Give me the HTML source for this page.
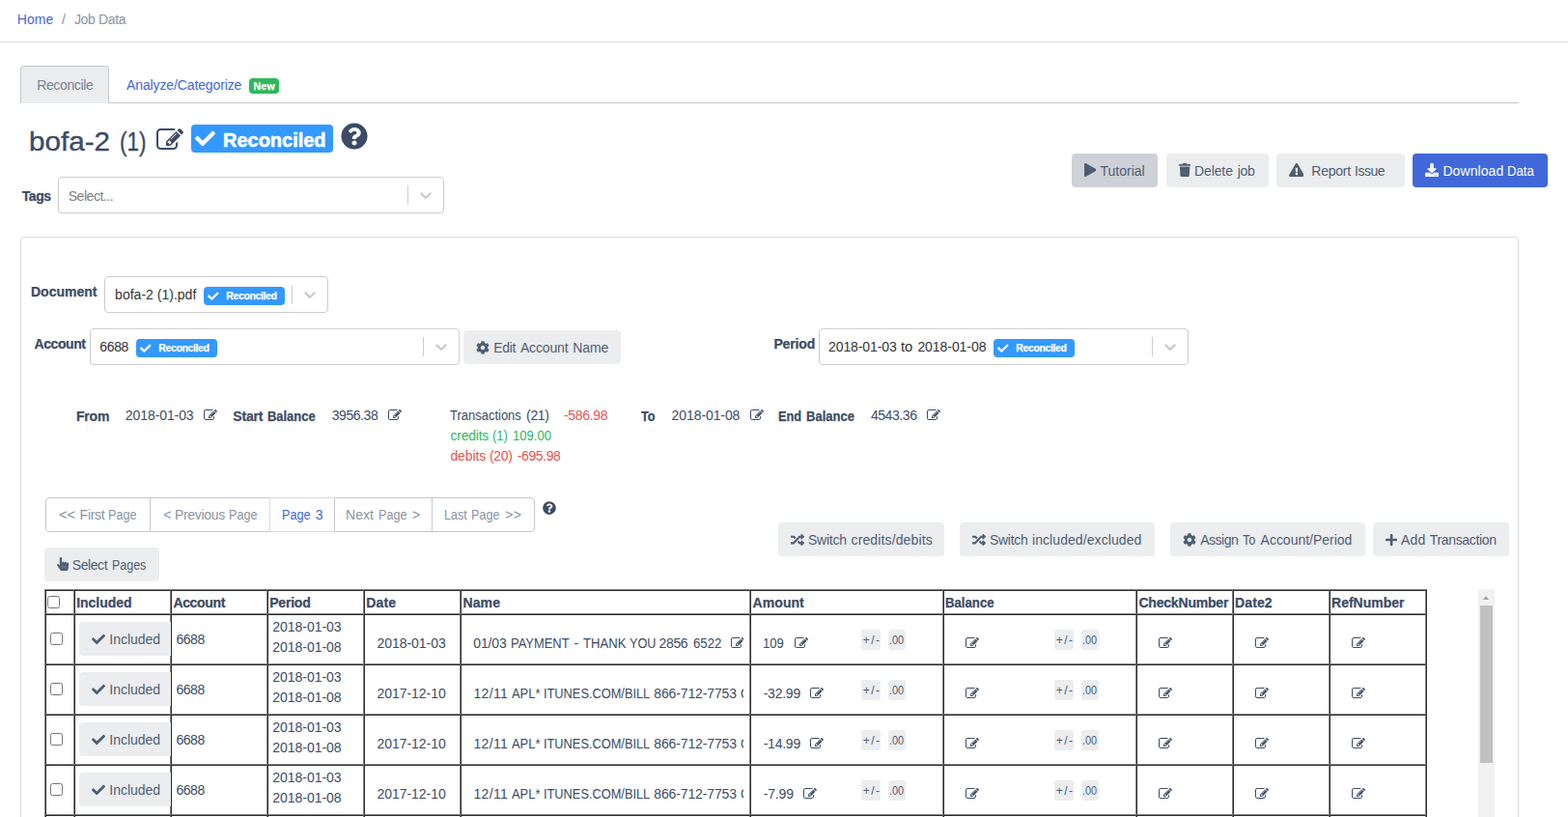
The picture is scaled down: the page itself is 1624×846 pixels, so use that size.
<!DOCTYPE html>
<html lang="en">
<head>
<meta charset="utf-8">
<title>Job Data</title>
<style>
*{box-sizing:border-box}
html,body{margin:0;padding:0}
body{width:1624px;height:846px;overflow:hidden;background:#fff;color:#3c4b64;font-family:"Liberation Sans",sans-serif;font-size:14px;line-height:21px;position:relative}
a{color:#4466d8;text-decoration:none}
button{font:inherit;border:0;margin:0;padding:0;display:block;text-align:left}
label{display:block}
.abs{position:absolute}
svg.i{position:absolute;display:block;fill:currentColor}
.tx{position:absolute;white-space:nowrap;line-height:21px;margin:0;font-weight:normal;transform-origin:0 0}
.tx.b{font-weight:bold;-webkit-text-stroke:0.25px}
.tx.red{color:#e55353}
.tx.green{color:#2eb85c}
.tx.mut{color:#8a93a2}
.crumb{left:0;top:0;width:1624px;height:44px;border-bottom:1px solid #d8dbe0}
.tabline{left:21px;top:106px;width:1552px;height:1px;background:#c4c9d0}
.tab1{left:21px;top:68px;width:92px;height:39px;border:1px solid #c4c9d0;border-bottom:0;border-radius:4px 4px 0 0;background:#ebedef;color:#768192}
.tab2{left:122px;top:68px;width:180px;height:39px}
.badge-new{position:absolute;left:136px;top:13px;width:31px;height:16px;background:#2eb85c;color:#fff;border-radius:4px}
.badge-new .tx{font-size:10.5px}
.titlerow{left:21px;top:124px;width:500px;height:40px}
h2{margin:0;font-weight:normal;font-size:28px}
h2 .tx{font-size:28px;-webkit-text-stroke:0.35px #3c4b64}
.bigbadge{position:absolute;left:177px;top:5px;width:147px;height:29px;border-radius:4px;background:#39f;color:#fff}
.bigbadge .tx{font-size:21px;-webkit-text-stroke:0.6px}
.btn{position:absolute;height:35px;border-radius:4px;background:#ebedef;color:#4f5d73}
.btn.sec{background:#ced2d8}
.btn.pri{background:#4068d9;color:#fff}
.sel{position:absolute;height:38px;border:1px solid #ccc;border-radius:4px;background:#fff;color:#333}
.sel .ph{color:#808080}
.sel .bar{position:absolute;right:36px;top:8px;width:1px;height:20px;background:#ccc}
.sel svg.ch{position:absolute;right:8px;top:8px;fill:#ccc}
.rb{position:absolute;width:84px;height:19px;background:#39f;color:#fff;border-radius:4px}
.rb .tx{font-size:10.5px}
.card{left:21px;top:245px;width:1552px;height:620px;border:1px solid #d8dbe0;border-radius:4px}
.summary{left:0;top:0;width:0;height:0}
.pg{left:47px;top:515px;width:507px;height:36px}
.pg>span{position:absolute;top:0;height:36px;border:1px solid #c4c9d0;color:#8a93a2}
.pg>span:first-child{border-radius:4px 0 0 4px}
.pg>span:nth-child(4){border-radius:0 4px 4px 0}
.pg>span.act{color:#4466d8;border-color:#d8dbe0 #c4c9d0 #d8dbe0 #d8dbe0}
.pg .tx{margin-left:0}
.tw{left:46px;top:610px;width:1432px;height:236px;overflow:hidden}
table.t{border-collapse:separate;border-spacing:0;table-layout:fixed;width:1432px;border:1px solid;border-color:#808080 #2c2c2c #2c2c2c #808080}
table.t th,table.t td{border:1px solid;border-color:#2c2c2c #808080 #808080 #2c2c2c;padding:0;text-align:left;white-space:nowrap;overflow:hidden;position:relative}
table.t th{height:25px}
table.t td{height:52px;background:#fff}
table.t td.ov{overflow:visible}
.nm{position:absolute;left:0;top:0;width:298px;height:50px}
.clip{width:292px;overflow:hidden}
.cb{position:absolute;width:13px;height:13px;border:1px solid #767676;border-radius:2.5px;background:#fff}
.inc{position:absolute;left:4px;top:7px;width:104px;height:35px;background:#ebedef;border-radius:4px;color:#4f5d73}
.mini{position:absolute;top:15px;height:21px;background:#ebedef;color:#4f5d73;border-radius:3px}
.mini .tx{font-size:12px}
.sb{left:1531px;top:610px;width:17px;height:236px;background:#f1f1f1}
.sb .thumb{position:absolute;left:2px;top:17px;width:13px;height:163px;background:#c1c1c1}
.sb .arrow{position:absolute;left:5px;top:7px;width:0;height:0;border-left:3.5px solid transparent;border-right:3.5px solid transparent;border-bottom:4px solid #a3a3a3}
</style>
</head>
<body>
<nav class="abs crumb"><a class="tx" style="left:17.75px;top:10px;letter-spacing:0.08px">Home</a><span class="tx mut" style="left:64px;top:10px">/</span><span class="tx mut" style="left:76.9px;top:10px;letter-spacing:-0.33px">Job Data</span></nav>
<div class="abs tabline"></div>
<div class="abs tab1"><span class="tx" style="left:16.2px;top:9px;letter-spacing:-0.36px">Reconcile</span></div>
<div class="abs tab2"><a class="tx" style="left:9px;top:10px;letter-spacing:-0.12px">Analyze/Categorize</a><span class="badge-new"><span class="tx b" style="left:4.5px;top:-2px;letter-spacing:0.25px">New</span></span></div>
<div class="abs titlerow"><h2><span class="tx" style="left:9.18px;top:12px;transform:scaleX(1.059)">bofa-2 </span><span class="tx" style="left:102.5px;top:12px;transform:scaleX(0.803)">(1)</span></h2><svg class="i" width="28" height="28" viewBox="0 0 1792 1792" style="left:141px;top:7px"><path d="M888 1184l116-116-152-152-116 116v56h96v96h56zm440-720q-16-16-33 1l-350 350q-17 17-1 33t33-1l350-350q17-17 1-33zm80 594v190q0 119-84.500 203.500t-203.500 84.500h-832q-119 0-203.500-84.500t-84.500-203.500v-832q0-119 84.500-203.500t203.500-84.500h832q63 0 117 25 15 7 18 23 3 17-9 29l-49 49q-14 14-32 8-23-6-45-6h-832q-66 0-113 47t-47 113v832q0 66 47 113t113 47h832q66 0 113-47t47-113v-126q0-13 9-22l64-64q15-15 35-7t20 29zm-96-738l288 288-672 672h-288v-288zm444 132l-92 92-288-288 92-92q28-28 68-28t68 28l152 152q28 28 28 68t-28 68z"/></svg><span class="bigbadge"><svg class="i" width="21" height="21" viewBox="0 0 512 512" style="left:4px;top:3.75px"><path d="M173.898 439.404l-166.4-166.4c-9.997-9.997-9.997-26.206 0-36.204l36.203-36.204c9.997-9.998 26.207-9.998 36.204 0L192 312.69 432.095 72.596c9.997-9.997 26.207-9.997 36.204 0l36.203 36.204c9.997 9.997 9.997 26.206 0 36.204l-294.4 294.401c-9.998 9.997-26.207 9.997-36.204-.001z"/></svg><span class="tx b" style="left:33.25px;top:4.6px;transform:scaleX(0.951)">Reconciled</span></span><svg class="i" width="28" height="28" viewBox="0 0 512 512" style="left:332px;top:2.5px"><path d="M504 256c0 136.997-111.043 248-248 248S8 392.997 8 256C8 119.083 119.043 8 256 8s248 111.083 248 248zM262.655 90c-54.497 0-89.255 22.957-116.549 63.758-3.536 5.286-2.353 12.415 2.715 16.258l34.699 26.310c5.205 3.947 12.621 3.008 16.665-2.122 17.864-22.658 30.113-35.797 57.303-35.797 20.429 0 45.698 13.148 45.698 32.958 0 14.976-12.363 22.667-32.534 33.976C247.128 238.528 216 254.941 216 296v4c0 6.627 5.373 12 12 12h56c6.627 0 12-5.373 12-12v-1.333c0-28.462 83.186-29.647 83.186-106.667 0-58.002-60.165-102-116.531-102zM256 338c-25.365 0-46 20.635-46 46 0 25.364 20.635 46 46 46s46-20.636 46-46c0-25.365-20.635-46-46-46z"/></svg></div>
<button class="btn sec" style="left:1110px;top:159px;width:89px"><svg class="i" width="12.25" height="14" viewBox="0 0 448 512" style="left:13px;top:10px"><path d="M424.4 214.7L72.4 6.6C43.8-10.3 0 6.1 0 47.9V464c0 37.5 40.7 60.1 72.4 41.3l352-208c31.4-18.5 31.5-64.1 0-82.600z"/></svg><span class="tx" style="left:29.5px;top:8px">Tutorial</span></button>
<button class="btn" style="left:1208px;top:159px;width:106px"><svg class="i" width="12.25" height="14" viewBox="0 0 448 512" style="left:13px;top:10px"><path d="M432 32H312l-9.400-18.700A24 24 0 0 0 281.100 0H166.800a23.720 23.720 0 0 0-21.400 13.300L136 32H16A16 16 0 0 0 0 48v32a16 16 0 0 0 16 16h416a16 16 0 0 0 16-16V48a16 16 0 0 0-16-16zM53.200 467a48 48 0 0 0 47.900 45h245.800a48 48 0 0 0 47.900-45L416 128H32z"/></svg><span class="tx" style="left:28.9px;top:8px;letter-spacing:-0.08px">Delete </span><span class="tx" style="left:73.8px;top:8px;letter-spacing:-0.3px">job</span></button>
<button class="btn" style="left:1322px;top:159px;width:133px"><svg class="i" width="15.75" height="14" viewBox="0 0 576 512" style="left:12.5px;top:10px"><path d="M569.517 440.013C587.975 472.007 564.806 512 527.940 512H48.054c-36.937 0-59.999-40.055-41.577-71.987L246.423 23.985c18.467-32.009 64.720-31.951 83.154 0l239.940 416.028zM288 354c-25.405 0-46 20.595-46 46s20.595 46 46 46 46-20.595 46-46-20.595-46-46-46zm-43.673-165.346l7.418 136c.347 6.364 5.609 11.346 11.982 11.346h48.546c6.373 0 11.635-4.982 11.982-11.346l7.418-136c.375-6.874-5.098-12.654-11.982-12.654h-63.383c-6.884 0-12.356 5.780-11.981 12.654z"/></svg><span class="tx" style="left:36.3px;top:8px;letter-spacing:-0.24px">Report </span><span class="tx" style="left:81.1px;top:8px;letter-spacing:-0.5px">Issue</span></button>
<button class="btn pri" style="left:1463px;top:159px;width:140px"><svg class="i" width="14" height="14" viewBox="0 0 512 512" style="left:13px;top:10px"><path d="M216 0h80c13.300 0 24 10.700 24 24v168h87.700c17.800 0 26.700 21.500 14.100 34.100L269.700 378.300c-7.500 7.500-19.800 7.500-27.300 0L90.100 226.100c-12.600-12.600-3.700-34.100 14.100-34.100H192V24c0-13.300 10.700-24 24-24zm296 376v112c0 13.300-10.700 24-24 24H24c-13.300 0-24-10.700-24-24V376c0-13.300 10.700-24 24-24h146.700l49 49c20.100 20.100 52.500 20.100 72.600 0l49-49H488c13.300 0 24 10.700 24 24zm-124 88c0-11-9-20-20-20s-20 9-20 20 9 20 20 20 20-9 20-20zm64 0c0-11-9-20-20-20s-20 9-20 20 9 20 20 20 20-9 20-20z"/></svg><span class="tx" style="left:31.4px;top:8px;letter-spacing:0.09px">Download </span><span class="tx" style="left:98.36px;top:8px;transform:scaleX(0.940)">Data</span></button>
<label class="tx b" style="left:22.75px;top:193px;letter-spacing:-0.42px">Tags</label><div class="sel" style="left:60px;top:183px;width:400px"><span class="tx ph" style="left:9.75px;top:9px;letter-spacing:-0.47px">Select...</span><span class="bar"></span><svg class="ch" width="20" height="20" viewBox="0 0 20 20"><path d="M4.516 7.548c0.436-0.446 1.043-0.481 1.576 0l3.908 3.747 3.908-3.747c0.533-0.481 1.141-0.446 1.574 0 0.436 0.445 0.408 1.197 0 1.615-0.406 0.418-4.695 4.502-4.695 4.502-0.217 0.223-0.502 0.335-0.787 0.335s-0.570-0.112-0.789-0.335c0 0-4.287-4.084-4.695-4.502s-0.436-1.170 0-1.615z"/></svg></div>
<div class="abs card"></div>
<label class="tx b" style="left:32px;top:292px">Document</label><div class="sel" style="left:108px;top:286px;width:232px"><span class="tx v" style="left:10.1px;top:8px;letter-spacing:0.01px">bofa-2 (1).pdf</span><span class="rb" style="left:102px;top:10px"><svg class="i" width="11.5" height="11.5" viewBox="0 0 512 512" style="left:4px;top:4px"><path d="M173.898 439.404l-166.4-166.4c-9.997-9.997-9.997-26.206 0-36.204l36.203-36.204c9.997-9.998 26.207-9.998 36.204 0L192 312.69 432.095 72.596c9.997-9.997 26.207-9.997 36.204 0l36.203 36.204c9.997 9.997 9.997 26.206 0 36.204l-294.4 294.401c-9.998 9.997-26.207 9.997-36.204-.001z"/></svg><span class="tx b" style="left:23.3px;top:-1px;letter-spacing:-0.37px">Reconciled</span></span><span class="bar"></span><svg class="ch" width="20" height="20" viewBox="0 0 20 20"><path d="M4.516 7.548c0.436-0.446 1.043-0.481 1.576 0l3.908 3.747 3.908-3.747c0.533-0.481 1.141-0.446 1.574 0 0.436 0.445 0.408 1.197 0 1.615-0.406 0.418-4.695 4.502-4.695 4.502-0.217 0.223-0.502 0.335-0.787 0.335s-0.570-0.112-0.789-0.335c0 0-4.287-4.084-4.695-4.502s-0.436-1.170 0-1.615z"/></svg></div>
<label class="tx b" style="left:35.5px;top:346px;letter-spacing:-0.42px">Account</label><div class="sel" style="left:93px;top:340px;width:383px"><span class="tx v" style="left:9.25px;top:8px;letter-spacing:-0.33px">6688</span><span class="rb" style="left:47px;top:10px"><svg class="i" width="11.5" height="11.5" viewBox="0 0 512 512" style="left:4px;top:4px"><path d="M173.898 439.404l-166.4-166.4c-9.997-9.997-9.997-26.206 0-36.204l36.203-36.204c9.997-9.998 26.207-9.998 36.204 0L192 312.69 432.095 72.596c9.997-9.997 26.207-9.997 36.204 0l36.203 36.204c9.997 9.997 9.997 26.206 0 36.204l-294.4 294.401c-9.998 9.997-26.207 9.997-36.204-.001z"/></svg><span class="tx b" style="left:23.3px;top:-1px;letter-spacing:-0.37px">Reconciled</span></span><span class="bar"></span><svg class="ch" width="20" height="20" viewBox="0 0 20 20"><path d="M4.516 7.548c0.436-0.446 1.043-0.481 1.576 0l3.908 3.747 3.908-3.747c0.533-0.481 1.141-0.446 1.574 0 0.436 0.445 0.408 1.197 0 1.615-0.406 0.418-4.695 4.502-4.695 4.502-0.217 0.223-0.502 0.335-0.787 0.335s-0.570-0.112-0.789-0.335c0 0-4.287-4.084-4.695-4.502s-0.436-1.170 0-1.615z"/></svg></div>
<button class="btn" style="left:480px;top:342px;width:163px"><svg class="i" width="14" height="14" viewBox="0 0 512 512" style="left:13px;top:11px"><path d="M487.400 315.700l-42.600-24.600c4.300-23.200 4.300-47 0-70.200l42.600-24.600c4.900-2.800 7.100-8.600 5.500-14-11.100-35.600-30-67.800-54.700-94.600-3.800-4.100-10-5.100-14.800-2.300L380.800 110c-17.900-15.400-38.500-27.300-60.800-35.100V25.800c0-5.600-3.900-10.500-9.400-11.700-36.700-8.200-74.300-7.800-109.200 0-5.500 1.200-9.400 6.100-9.400 11.700V75c-22.200 7.900-42.800 19.800-60.800 35.100L88.700 85.500c-4.900-2.800-11-1.900-14.800 2.300-24.700 26.700-43.600 58.900-54.700 94.600-1.700 5.400.6 11.200 5.500 14L67.300 221c-4.300 23.200-4.300 47 0 70.200l-42.600 24.600c-4.900 2.800-7.100 8.600-5.500 14 11.100 35.600 30 67.800 54.700 94.600 3.800 4.100 10 5.100 14.800 2.300l42.600-24.600c17.900 15.400 38.500 27.300 60.800 35.100v49.200c0 5.600 3.900 10.500 9.400 11.700 36.700 8.200 74.300 7.800 109.200 0 5.500-1.200 9.400-6.100 9.400-11.700v-49.200c22.200-7.900 42.800-19.800 60.800-35.100l42.600 24.600c4.900 2.800 11 1.900 14.800-2.300 24.700-26.700 43.600-58.900 54.700-94.600 1.500-5.500-.7-11.300-5.600-14.100zM256 336c-44.100 0-80-35.900-80-80s35.900-80 80-80 80 35.900 80 80-35.900 80-80 80z"/></svg><span class="tx" style="left:31.3px;top:8px;letter-spacing:-0.37px">Edit </span><span class="tx" style="left:58.9px;top:8px;letter-spacing:-0.15px">Account </span><span class="tx" style="left:113.3px;top:8px;letter-spacing:-0.1px">Name</span></button>
<label class="tx b" style="left:801.4px;top:346px;letter-spacing:-0.12px">Period</label><div class="sel" style="left:848px;top:340px;width:383px"><span class="tx v" style="left:9px;top:8px;letter-spacing:-0.09px">2018-01-03 </span><span class="tx v" style="left:84.1px;top:8px;transform:scaleX(1.058)">to </span><span class="tx v" style="left:101.4px;top:8px;letter-spacing:-0.06px">2018-01-08</span><span class="rb" style="left:180px;top:10px"><svg class="i" width="11.5" height="11.5" viewBox="0 0 512 512" style="left:4px;top:4px"><path d="M173.898 439.404l-166.4-166.4c-9.997-9.997-9.997-26.206 0-36.204l36.203-36.204c9.997-9.998 26.207-9.998 36.204 0L192 312.69 432.095 72.596c9.997-9.997 26.207-9.997 36.204 0l36.203 36.204c9.997 9.997 9.997 26.206 0 36.204l-294.4 294.401c-9.998 9.997-26.207 9.997-36.204-.001z"/></svg><span class="tx b" style="left:23.3px;top:-1px;letter-spacing:-0.37px">Reconciled</span></span><span class="bar"></span><svg class="ch" width="20" height="20" viewBox="0 0 20 20"><path d="M4.516 7.548c0.436-0.446 1.043-0.481 1.576 0l3.908 3.747 3.908-3.747c0.533-0.481 1.141-0.446 1.574 0 0.436 0.445 0.408 1.197 0 1.615-0.406 0.418-4.695 4.502-4.695 4.502-0.217 0.223-0.502 0.335-0.787 0.335s-0.570-0.112-0.789-0.335c0 0-4.287-4.084-4.695-4.502s-0.436-1.170 0-1.615z"/></svg></div>
<div class="abs summary"><span class="tx b" style="left:78.98px;top:421px;letter-spacing:-0.19px">From</span><span class="tx" style="left:129.85px;top:420px;letter-spacing:-0.09px">2018-01-03</span><svg class="i" width="14" height="14" viewBox="0 0 1792 1792" style="left:210.5px;top:423px"><path d="M888 1184l116-116-152-152-116 116v56h96v96h56zm440-720q-16-16-33 1l-350 350q-17 17-1 33t33-1l350-350q17-17 1-33zm80 594v190q0 119-84.500 203.500t-203.500 84.500h-832q-119 0-203.500-84.500t-84.500-203.500v-832q0-119 84.500-203.500t203.500-84.500h832q63 0 117 25 15 7 18 23 3 17-9 29l-49 49q-14 14-32 8-23-6-45-6h-832q-66 0-113 47t-47 113v832q0 66 47 113t113 47h832q66 0 113-47t47-113v-126q0-13 9-22l64-64q15-15 35-7t20 29zm-96-738l288 288-672 672h-288v-288zm444 132l-92 92-288-288 92-92q28-28 68-28t68 28l152 152q28 28 28 68t-28 68z"/></svg><span class="tx b" style="left:241.3px;top:421px;letter-spacing:-0.2px">Start </span><span class="tx b" style="left:277.08px;top:421px;transform:scaleX(0.923)">Balance</span><span class="tx" style="left:343.7px;top:420px;letter-spacing:-0.43px">3956.38</span><svg class="i" width="14" height="14" viewBox="0 0 1792 1792" style="left:402px;top:423px"><path d="M888 1184l116-116-152-152-116 116v56h96v96h56zm440-720q-16-16-33 1l-350 350q-17 17-1 33t33-1l350-350q17-17 1-33zm80 594v190q0 119-84.500 203.500t-203.500 84.500h-832q-119 0-203.500-84.500t-84.500-203.500v-832q0-119 84.500-203.500t203.500-84.500h832q63 0 117 25 15 7 18 23 3 17-9 29l-49 49q-14 14-32 8-23-6-45-6h-832q-66 0-113 47t-47 113v832q0 66 47 113t113 47h832q66 0 113-47t47-113v-126q0-13 9-22l64-64q15-15 35-7t20 29zm-96-738l288 288-672 672h-288v-288zm444 132l-92 92-288-288 92-92q28-28 68-28t68 28l152 152q28 28 28 68t-28 68z"/></svg><span class="tx" style="left:466.45px;top:420px;transform:scaleX(0.927)">Transactions </span><span class="tx" style="left:545.1px;top:420px;letter-spacing:-0.35px">(21)</span><span class="tx red" style="left:583.9px;top:420px;letter-spacing:-0.3px">-586.98</span><span class="tx green" style="left:466.45px;top:441px;letter-spacing:-0.22px">credits </span><span class="tx green" style="left:510.47px;top:441px;transform:scaleX(0.925)">(1) </span><span class="tx green" style="left:530.67px;top:441px;transform:scaleX(0.933)">109.00</span><span class="tx red" style="left:466.45px;top:462px;letter-spacing:-0.13px">debits </span><span class="tx red" style="left:507px;top:462px;letter-spacing:-0.3px">(20) </span><span class="tx red" style="left:535.7px;top:462px;letter-spacing:-0.38px">-695.98</span><span class="tx b" style="left:664px;top:421px;transform:scaleX(0.906)">To</span><span class="tx" style="left:695.6px;top:420px;letter-spacing:-0.09px">2018-01-08</span><svg class="i" width="14" height="14" viewBox="0 0 1792 1792" style="left:776.5px;top:423px"><path d="M888 1184l116-116-152-152-116 116v56h96v96h56zm440-720q-16-16-33 1l-350 350q-17 17-1 33t33-1l350-350q17-17 1-33zm80 594v190q0 119-84.500 203.500t-203.500 84.500h-832q-119 0-203.500-84.500t-84.500-203.500v-832q0-119 84.500-203.500t203.500-84.500h832q63 0 117 25 15 7 18 23 3 17-9 29l-49 49q-14 14-32 8-23-6-45-6h-832q-66 0-113 47t-47 113v832q0 66 47 113t113 47h832q66 0 113-47t47-113v-126q0-13 9-22l64-64q15-15 35-7t20 29zm-96-738l288 288-672 672h-288v-288zm444 132l-92 92-288-288 92-92q28-28 68-28t68 28l152 152q28 28 28 68t-28 68z"/></svg><span class="tx b" style="left:806.39px;top:421px;transform:scaleX(0.912)">End </span><span class="tx b" style="left:835.32px;top:421px;transform:scaleX(0.929)">Balance</span><span class="tx" style="left:901.9px;top:420px;letter-spacing:-0.42px">4543.36</span><svg class="i" width="14" height="14" viewBox="0 0 1792 1792" style="left:959.5px;top:423px"><path d="M888 1184l116-116-152-152-116 116v56h96v96h56zm440-720q-16-16-33 1l-350 350q-17 17-1 33t33-1l350-350q17-17 1-33zm80 594v190q0 119-84.500 203.500t-203.500 84.500h-832q-119 0-203.500-84.500t-84.500-203.500v-832q0-119 84.500-203.500t203.500-84.500h832q63 0 117 25 15 7 18 23 3 17-9 29l-49 49q-14 14-32 8-23-6-45-6h-832q-66 0-113 47t-47 113v832q0 66 47 113t113 47h832q66 0 113-47t47-113v-126q0-13 9-22l64-64q15-15 35-7t20 29zm-96-738l288 288-672 672h-288v-288zm444 132l-92 92-288-288 92-92q28-28 68-28t68 28l152 152q28 28 28 68t-28 68z"/></svg></div>
<div class="abs pg"><span style="left:0px;width:109px"><span class="tx" style="left:13.2px;top:7px;transform:scaleX(1.050)">&lt;&lt; </span><span class="tx" style="left:34.6px;top:7px;letter-spacing:-0.27px">First </span><span class="tx" style="left:64.4px;top:7px;transform:scaleX(0.900)">Page</span></span><span style="left:108px;width:125px"><span class="tx" style="left:13.2px;top:7px">&lt; </span><span class="tx" style="left:24.9px;top:7px;letter-spacing:-0.29px">Previous </span><span class="tx" style="left:81.2px;top:7px;transform:scaleX(0.900)">Page</span></span><span style="left:299px;width:102px"><span class="tx" style="left:11.05px;top:7px;letter-spacing:0.05px">Next </span><span class="tx" style="left:44.5px;top:7px;transform:scaleX(0.903)">Page </span><span class="tx" style="left:79.9px;top:7px">&gt;</span></span><span style="left:400px;width:107px"><span class="tx" style="left:11.8px;top:7px;transform:scaleX(0.896)">Last </span><span class="tx" style="left:40.1px;top:7px;transform:scaleX(0.900)">Page </span><span class="tx" style="left:75.3px;top:7px;letter-spacing:0.4px">&gt;&gt;</span></span><span class="act" style="left:232px;width:68px"><span class="tx" style="left:12.2px;top:7px;transform:scaleX(0.903)">Page </span><span class="tx" style="left:46.65px;top:7px">3</span></span></div>
<svg class="i" width="14" height="14" viewBox="0 0 512 512" style="left:562px;top:519px"><path d="M504 256c0 136.997-111.043 248-248 248S8 392.997 8 256C8 119.083 119.043 8 256 8s248 111.083 248 248zM262.655 90c-54.497 0-89.255 22.957-116.549 63.758-3.536 5.286-2.353 12.415 2.715 16.258l34.699 26.310c5.205 3.947 12.621 3.008 16.665-2.122 17.864-22.658 30.113-35.797 57.303-35.797 20.429 0 45.698 13.148 45.698 32.958 0 14.976-12.363 22.667-32.534 33.976C247.128 238.528 216 254.941 216 296v4c0 6.627 5.373 12 12 12h56c6.627 0 12-5.373 12-12v-1.333c0-28.462 83.186-29.647 83.186-106.667 0-58.002-60.165-102-116.531-102zM256 338c-25.365 0-46 20.635-46 46 0 25.364 20.635 46 46 46s46-20.636 46-46c0-25.365-20.635-46-46-46z"/></svg>
<button class="btn" style="left:806px;top:541px;width:172px"><svg class="i" width="14" height="14" viewBox="0 0 512 512" style="left:13px;top:11px"><path d="M504.971 359.029c9.373 9.373 9.373 24.569 0 33.941l-80 79.984c-15.010 15.010-40.971 4.490-40.971-16.971V416h-58.785a12.004 12.004 0 0 1-8.773-3.812l-70.556-75.596 53.333-57.143L352 336h32v-39.981c0-21.438 25.943-31.998 40.971-16.971l80 79.981zM12 176h84l52.781 56.551 53.333-57.143-70.556-75.596A11.999 11.999 0 0 0 122.785 96H12c-6.627 0-12 5.373-12 12v56c0 6.627 5.373 12 12 12zm372 0v39.984c0 21.460 25.961 31.980 40.971 16.971l80-79.984c9.373-9.373 9.373-24.569 0-33.941l-80-79.981C409.943 24.021 384 34.582 384 56.019V96h-58.785a12.004 12.004 0 0 0-8.773 3.812L96 336H12c-6.627 0-12 5.373-12 12v56c0 6.627 5.373 12 12 12h110.785c3.326 0 6.503-1.381 8.773-3.812L352 176h32z"/></svg><span class="tx" style="left:31px;top:8px;letter-spacing:-0.24px">Switch </span><span class="tx" style="left:75.5px;top:8px;letter-spacing:0.13px">credits/debits</span></button>
<button class="btn" style="left:994px;top:541px;width:202px"><svg class="i" width="14" height="14" viewBox="0 0 512 512" style="left:13px;top:11px"><path d="M504.971 359.029c9.373 9.373 9.373 24.569 0 33.941l-80 79.984c-15.010 15.010-40.971 4.490-40.971-16.971V416h-58.785a12.004 12.004 0 0 1-8.773-3.812l-70.556-75.596 53.333-57.143L352 336h32v-39.981c0-21.438 25.943-31.998 40.971-16.971l80 79.981zM12 176h84l52.781 56.551 53.333-57.143-70.556-75.596A11.999 11.999 0 0 0 122.785 96H12c-6.627 0-12 5.373-12 12v56c0 6.627 5.373 12 12 12zm372 0v39.984c0 21.460 25.961 31.980 40.971 16.971l80-79.984c9.373-9.373 9.373-24.569 0-33.941l-80-79.981C409.943 24.021 384 34.582 384 56.019V96h-58.785a12.004 12.004 0 0 0-8.773 3.812L96 336H12c-6.627 0-12 5.373-12 12v56c0 6.627 5.373 12 12 12h110.785c3.326 0 6.503-1.381 8.773-3.812L352 176h32z"/></svg><span class="tx" style="left:30.9px;top:8px;letter-spacing:-0.25px">Switch </span><span class="tx" style="left:74.95px;top:8px;letter-spacing:0.08px">included/excluded</span></button>
<button class="btn" style="left:1212px;top:541px;width:202px"><svg class="i" width="14" height="14" viewBox="0 0 512 512" style="left:13px;top:11px"><path d="M487.400 315.700l-42.600-24.600c4.300-23.200 4.300-47 0-70.200l42.600-24.600c4.900-2.800 7.100-8.600 5.500-14-11.100-35.600-30-67.800-54.700-94.600-3.800-4.100-10-5.100-14.800-2.300L380.800 110c-17.900-15.400-38.500-27.300-60.800-35.100V25.800c0-5.600-3.900-10.500-9.400-11.700-36.700-8.200-74.300-7.800-109.200 0-5.500 1.200-9.400 6.100-9.400 11.700V75c-22.200 7.900-42.800 19.800-60.800 35.100L88.700 85.500c-4.900-2.800-11-1.900-14.800 2.300-24.700 26.700-43.600 58.900-54.700 94.600-1.700 5.400.6 11.200 5.500 14L67.300 221c-4.300 23.200-4.300 47 0 70.200l-42.600 24.600c-4.900 2.800-7.100 8.600-5.500 14 11.100 35.600 30 67.800 54.700 94.600 3.800 4.100 10 5.100 14.800 2.300l42.600-24.600c17.900 15.400 38.500 27.300 60.800 35.100v49.200c0 5.600 3.900 10.500 9.400 11.700 36.700 8.200 74.300 7.800 109.200 0 5.500-1.200 9.400-6.100 9.400-11.700v-49.200c22.200-7.900 42.800-19.800 60.800-35.100l42.600 24.600c4.900 2.800 11 1.900 14.800-2.300 24.700-26.700 43.600-58.900 54.700-94.600 1.500-5.500-.7-11.300-5.600-14.100zM256 336c-44.100 0-80-35.900-80-80s35.900-80 80-80 80 35.900 80 80-35.900 80-80 80z"/></svg><span class="tx" style="left:31.15px;top:8px;letter-spacing:-0.47px">Assign </span><span class="tx" style="left:75.1px;top:8px;transform:scaleX(0.907)">To </span><span class="tx" style="left:93.6px;top:8px;letter-spacing:-0.02px">Account/Period</span></button>
<button class="btn" style="left:1422px;top:541px;width:141px"><svg class="i" width="12.25" height="14" viewBox="0 0 448 512" style="left:13px;top:11px"><path d="M416 208H272V64c0-17.670-14.330-32-32-32h-32c-17.670 0-32 14.330-32 32v144H32c-17.670 0-32 14.330-32 32v32c0 17.670 14.330 32 32 32h144v144c0 17.670 14.330 32 32 32h32c17.670 0 32-14.330 32-32V304h144c17.670 0 32-14.330 32-32v-32c0-17.670-14.330-32-32-32z"/></svg><span class="tx" style="left:28.9px;top:8px;letter-spacing:0.27px">Add </span><span class="tx" style="left:58.8px;top:8px;letter-spacing:-0.35px">Transaction</span></button>
<button class="btn" style="left:46px;top:567px;width:119px"><svg class="i" width="12.25" height="14" viewBox="0 0 448 512" style="left:13px;top:10px"><path d="M448 240v96c0 3.084-.356 6.159-1.063 9.162l-32 136C410.686 499.230 394.562 512 376 512H168a40.004 40.004 0 0 1-32.350-16.473l-127.997-176c-12.993-17.866-9.043-42.883 8.822-55.876 17.867-12.994 42.884-9.043 55.877 8.823L104 315.992V40c0-22.091 17.908-40 40-40s40 17.909 40 40v200h8v-40c0-22.091 17.908-40 40-40s40 17.909 40 40v40h8v-24c0-22.091 17.908-40 40-40s40 17.909 40 40v24h8c0-22.091 17.908-40 40-40s40 17.909 40 40zm-256 80h-8v96h8v-96zm88 0h-8v96h8v-96zm88 0h-8v96h8v-96z"/></svg><span class="tx" style="left:28.8px;top:8px;letter-spacing:-0.43px">Select </span><span class="tx" style="left:69.71px;top:8px;transform:scaleX(0.890)">Pages</span></button>
<div class="abs tw"><table class="t">
<colgroup><col style="width:30px"><col style="width:100px"><col style="width:100px"><col style="width:100px"><col style="width:100px"><col style="width:300px"><col style="width:200px"><col style="width:200px"><col style="width:100px"><col style="width:100px"><col style="width:100px"></colgroup>
<thead><tr><th><span class="cb" style="left:1px;top:5px"></span></th><th><span class="tx b" style="left:1.2px;top:2px;letter-spacing:-0.04px">Included</span></th><th><span class="tx b" style="left:1.4px;top:2px;letter-spacing:-0.35px">Account</span></th><th><span class="tx b" style="left:1.2px;top:2px;letter-spacing:-0.2px">Period</span></th><th><span class="tx b" style="left:1.3px;top:2px;letter-spacing:0.1px">Date</span></th><th><span class="tx b" style="left:1.4px;top:2px;letter-spacing:0.13px">Name</span></th><th><span class="tx b" style="left:1.6px;top:2px;letter-spacing:0.06px">Amount</span></th><th><span class="tx b" style="left:1.16px;top:2px;transform:scaleX(0.942)">Balance</span></th><th><span class="tx b" style="left:1.4px;top:2px;letter-spacing:-0.19px">CheckNumber</span></th><th><span class="tx b" style="left:1px;top:2px;letter-spacing:0.12px">Date2</span></th><th><span class="tx b" style="left:1.1px;top:2px;letter-spacing:-0.01px">RefNumber</span></th></tr></thead>
<tbody>
<tr><td><span class="cb" style="left:4px;top:18px"></span></td><td class="ov"><button class="inc"><svg class="i" width="14" height="14" viewBox="0 0 512 512" style="left:12.5px;top:10.5px"><path d="M173.898 439.404l-166.4-166.4c-9.997-9.997-9.997-26.206 0-36.204l36.203-36.204c9.997-9.998 26.207-9.998 36.204 0L192 312.69 432.095 72.596c9.997-9.997 26.207-9.997 36.204 0l36.203 36.204c9.997 9.997 9.997 26.206 0 36.204l-294.4 294.401c-9.998 9.997-26.207 9.997-36.204-.001z"/></svg><span class="tx" style="left:31.3px;top:8px;letter-spacing:-0.01px">Included</span></button></td><td><span class="tx" style="left:4.4px;top:15px;letter-spacing:-0.43px">6688</span></td><td><span class="tx" style="left:4.2px;top:2px;letter-spacing:-0.02px">2018-01-03</span><span class="tx" style="left:4.2px;top:23px;letter-spacing:-0.02px">2018-01-08</span></td><td><span class="tx" style="left:12.5px;top:19px;letter-spacing:-0.04px">2018-01-03</span></td><td><span class="nm clip"><span class="tx" style="left:12.25px;top:19px;letter-spacing:-0.12px">01/03 </span><span class="tx" style="left:51.33px;top:19px;transform:scaleX(0.924)">PAYMENT </span><span class="tx" style="left:116.6px;top:19px">- </span><span class="tx" style="left:126px;top:19px;transform:scaleX(0.936)">THANK </span><span class="tx" style="left:173.75px;top:19px;transform:scaleX(0.908)">YOU </span><span class="tx" style="left:204.6px;top:19px;letter-spacing:-0.37px">2856 </span><span class="tx" style="left:239.8px;top:19px;transform:scaleX(0.942)">6522</span><svg class="i" width="14" height="14" viewBox="0 0 1792 1792" style="left:279px;top:22px"><path d="M888 1184l116-116-152-152-116 116v56h96v96h56zm440-720q-16-16-33 1l-350 350q-17 17-1 33t33-1l350-350q17-17 1-33zm80 594v190q0 119-84.500 203.500t-203.500 84.500h-832q-119 0-203.500-84.500t-84.500-203.500v-832q0-119 84.500-203.500t203.500-84.500h832q63 0 117 25 15 7 18 23 3 17-9 29l-49 49q-14 14-32 8-23-6-45-6h-832q-66 0-113 47t-47 113v832q0 66 47 113t113 47h832q66 0 113-47t47-113v-126q0-13 9-22l64-64q15-15 35-7t20 29zm-96-738l288 288-672 672h-288v-288zm444 132l-92 92-288-288 92-92q28-28 68-28t68 28l152 152q28 28 28 68t-28 68z"/></svg></span></td><td><span class="tx" style="left:12.17px;top:19px;transform:scaleX(0.932)">109</span><svg class="i" width="14" height="14" viewBox="0 0 1792 1792" style="left:44.8px;top:22px"><path d="M888 1184l116-116-152-152-116 116v56h96v96h56zm440-720q-16-16-33 1l-350 350q-17 17-1 33t33-1l350-350q17-17 1-33zm80 594v190q0 119-84.500 203.500t-203.500 84.500h-832q-119 0-203.500-84.500t-84.500-203.500v-832q0-119 84.500-203.500t203.500-84.500h832q63 0 117 25 15 7 18 23 3 17-9 29l-49 49q-14 14-32 8-23-6-45-6h-832q-66 0-113 47t-47 113v832q0 66 47 113t113 47h832q66 0 113-47t47-113v-126q0-13 9-22l64-64q15-15 35-7t20 29zm-96-738l288 288-672 672h-288v-288zm444 132l-92 92-288-288 92-92q28-28 68-28t68 28l152 152q28 28 28 68t-28 68z"/></svg><button class="mini" style="left:114px;width:20px"><span class="tx" style="left:1.7px;top:1px;letter-spacing:1.45px">+/-</span></button><button class="mini" style="left:142px;width:18px"><span class="tx" style="left:1.19px;top:1px;transform:scaleX(0.906)">.00</span></button></td><td><svg class="i" width="14" height="14" viewBox="0 0 1792 1792" style="left:22px;top:22px"><path d="M888 1184l116-116-152-152-116 116v56h96v96h56zm440-720q-16-16-33 1l-350 350q-17 17-1 33t33-1l350-350q17-17 1-33zm80 594v190q0 119-84.500 203.500t-203.500 84.500h-832q-119 0-203.500-84.500t-84.500-203.500v-832q0-119 84.500-203.500t203.500-84.500h832q63 0 117 25 15 7 18 23 3 17-9 29l-49 49q-14 14-32 8-23-6-45-6h-832q-66 0-113 47t-47 113v832q0 66 47 113t113 47h832q66 0 113-47t47-113v-126q0-13 9-22l64-64q15-15 35-7t20 29zm-96-738l288 288-672 672h-288v-288zm444 132l-92 92-288-288 92-92q28-28 68-28t68 28l152 152q28 28 28 68t-28 68z"/></svg><button class="mini" style="left:114px;width:20px"><span class="tx" style="left:1.7px;top:1px;letter-spacing:1.45px">+/-</span></button><button class="mini" style="left:142px;width:18px"><span class="tx" style="left:1.19px;top:1px;transform:scaleX(0.906)">.00</span></button></td><td><svg class="i" width="14" height="14" viewBox="0 0 1792 1792" style="left:22px;top:22px"><path d="M888 1184l116-116-152-152-116 116v56h96v96h56zm440-720q-16-16-33 1l-350 350q-17 17-1 33t33-1l350-350q17-17 1-33zm80 594v190q0 119-84.500 203.500t-203.500 84.500h-832q-119 0-203.500-84.500t-84.500-203.500v-832q0-119 84.500-203.500t203.500-84.500h832q63 0 117 25 15 7 18 23 3 17-9 29l-49 49q-14 14-32 8-23-6-45-6h-832q-66 0-113 47t-47 113v832q0 66 47 113t113 47h832q66 0 113-47t47-113v-126q0-13 9-22l64-64q15-15 35-7t20 29zm-96-738l288 288-672 672h-288v-288zm444 132l-92 92-288-288 92-92q28-28 68-28t68 28l152 152q28 28 28 68t-28 68z"/></svg></td><td><svg class="i" width="14" height="14" viewBox="0 0 1792 1792" style="left:22px;top:22px"><path d="M888 1184l116-116-152-152-116 116v56h96v96h56zm440-720q-16-16-33 1l-350 350q-17 17-1 33t33-1l350-350q17-17 1-33zm80 594v190q0 119-84.500 203.500t-203.500 84.500h-832q-119 0-203.500-84.500t-84.500-203.500v-832q0-119 84.500-203.500t203.500-84.500h832q63 0 117 25 15 7 18 23 3 17-9 29l-49 49q-14 14-32 8-23-6-45-6h-832q-66 0-113 47t-47 113v832q0 66 47 113t113 47h832q66 0 113-47t47-113v-126q0-13 9-22l64-64q15-15 35-7t20 29zm-96-738l288 288-672 672h-288v-288zm444 132l-92 92-288-288 92-92q28-28 68-28t68 28l152 152q28 28 28 68t-28 68z"/></svg></td><td><svg class="i" width="14" height="14" viewBox="0 0 1792 1792" style="left:22px;top:22px"><path d="M888 1184l116-116-152-152-116 116v56h96v96h56zm440-720q-16-16-33 1l-350 350q-17 17-1 33t33-1l350-350q17-17 1-33zm80 594v190q0 119-84.500 203.500t-203.500 84.500h-832q-119 0-203.500-84.500t-84.500-203.500v-832q0-119 84.500-203.500t203.500-84.500h832q63 0 117 25 15 7 18 23 3 17-9 29l-49 49q-14 14-32 8-23-6-45-6h-832q-66 0-113 47t-47 113v832q0 66 47 113t113 47h832q66 0 113-47t47-113v-126q0-13 9-22l64-64q15-15 35-7t20 29zm-96-738l288 288-672 672h-288v-288zm444 132l-92 92-288-288 92-92q28-28 68-28t68 28l152 152q28 28 28 68t-28 68z"/></svg></td></tr>
<tr><td><span class="cb" style="left:4px;top:18px"></span></td><td class="ov"><button class="inc"><svg class="i" width="14" height="14" viewBox="0 0 512 512" style="left:12.5px;top:10.5px"><path d="M173.898 439.404l-166.4-166.4c-9.997-9.997-9.997-26.206 0-36.204l36.203-36.204c9.997-9.998 26.207-9.998 36.204 0L192 312.69 432.095 72.596c9.997-9.997 26.207-9.997 36.204 0l36.203 36.204c9.997 9.997 9.997 26.206 0 36.204l-294.4 294.401c-9.998 9.997-26.207 9.997-36.204-.001z"/></svg><span class="tx" style="left:31.3px;top:8px;letter-spacing:-0.01px">Included</span></button></td><td><span class="tx" style="left:4.4px;top:15px;letter-spacing:-0.43px">6688</span></td><td><span class="tx" style="left:4.2px;top:2px;letter-spacing:-0.02px">2018-01-03</span><span class="tx" style="left:4.2px;top:23px;letter-spacing:-0.02px">2018-01-08</span></td><td><span class="tx" style="left:12.5px;top:19px;letter-spacing:-0.04px">2017-12-10</span></td><td><span class="nm clip"><span class="tx" style="left:12.5px;top:19px;letter-spacing:0.32px">12/11 </span><span class="tx" style="left:51.7px;top:19px;transform:scaleX(0.922)">APL* </span><span class="tx" style="left:84.59px;top:19px;transform:scaleX(0.914)">ITUNES.COM/BILL </span><span class="tx" style="left:199.25px;top:19px;letter-spacing:-0.13px">866-712-7753 </span><span class="tx" style="left:289.25px;top:19px;transform:scaleX(0.912)">CA</span></span></td><td><span class="tx" style="left:12.7px;top:19px;letter-spacing:-0.24px">-32.99</span><svg class="i" width="14" height="14" viewBox="0 0 1792 1792" style="left:61px;top:22px"><path d="M888 1184l116-116-152-152-116 116v56h96v96h56zm440-720q-16-16-33 1l-350 350q-17 17-1 33t33-1l350-350q17-17 1-33zm80 594v190q0 119-84.500 203.500t-203.500 84.500h-832q-119 0-203.500-84.500t-84.500-203.500v-832q0-119 84.500-203.500t203.500-84.500h832q63 0 117 25 15 7 18 23 3 17-9 29l-49 49q-14 14-32 8-23-6-45-6h-832q-66 0-113 47t-47 113v832q0 66 47 113t113 47h832q66 0 113-47t47-113v-126q0-13 9-22l64-64q15-15 35-7t20 29zm-96-738l288 288-672 672h-288v-288zm444 132l-92 92-288-288 92-92q28-28 68-28t68 28l152 152q28 28 28 68t-28 68z"/></svg><button class="mini" style="left:114px;width:20px"><span class="tx" style="left:1.7px;top:1px;letter-spacing:1.45px">+/-</span></button><button class="mini" style="left:142px;width:18px"><span class="tx" style="left:1.19px;top:1px;transform:scaleX(0.906)">.00</span></button></td><td><svg class="i" width="14" height="14" viewBox="0 0 1792 1792" style="left:22px;top:22px"><path d="M888 1184l116-116-152-152-116 116v56h96v96h56zm440-720q-16-16-33 1l-350 350q-17 17-1 33t33-1l350-350q17-17 1-33zm80 594v190q0 119-84.500 203.500t-203.500 84.500h-832q-119 0-203.500-84.500t-84.500-203.500v-832q0-119 84.500-203.500t203.500-84.500h832q63 0 117 25 15 7 18 23 3 17-9 29l-49 49q-14 14-32 8-23-6-45-6h-832q-66 0-113 47t-47 113v832q0 66 47 113t113 47h832q66 0 113-47t47-113v-126q0-13 9-22l64-64q15-15 35-7t20 29zm-96-738l288 288-672 672h-288v-288zm444 132l-92 92-288-288 92-92q28-28 68-28t68 28l152 152q28 28 28 68t-28 68z"/></svg><button class="mini" style="left:114px;width:20px"><span class="tx" style="left:1.7px;top:1px;letter-spacing:1.45px">+/-</span></button><button class="mini" style="left:142px;width:18px"><span class="tx" style="left:1.19px;top:1px;transform:scaleX(0.906)">.00</span></button></td><td><svg class="i" width="14" height="14" viewBox="0 0 1792 1792" style="left:22px;top:22px"><path d="M888 1184l116-116-152-152-116 116v56h96v96h56zm440-720q-16-16-33 1l-350 350q-17 17-1 33t33-1l350-350q17-17 1-33zm80 594v190q0 119-84.500 203.500t-203.500 84.500h-832q-119 0-203.500-84.500t-84.500-203.500v-832q0-119 84.500-203.500t203.500-84.500h832q63 0 117 25 15 7 18 23 3 17-9 29l-49 49q-14 14-32 8-23-6-45-6h-832q-66 0-113 47t-47 113v832q0 66 47 113t113 47h832q66 0 113-47t47-113v-126q0-13 9-22l64-64q15-15 35-7t20 29zm-96-738l288 288-672 672h-288v-288zm444 132l-92 92-288-288 92-92q28-28 68-28t68 28l152 152q28 28 28 68t-28 68z"/></svg></td><td><svg class="i" width="14" height="14" viewBox="0 0 1792 1792" style="left:22px;top:22px"><path d="M888 1184l116-116-152-152-116 116v56h96v96h56zm440-720q-16-16-33 1l-350 350q-17 17-1 33t33-1l350-350q17-17 1-33zm80 594v190q0 119-84.500 203.500t-203.500 84.500h-832q-119 0-203.500-84.500t-84.500-203.500v-832q0-119 84.500-203.500t203.500-84.500h832q63 0 117 25 15 7 18 23 3 17-9 29l-49 49q-14 14-32 8-23-6-45-6h-832q-66 0-113 47t-47 113v832q0 66 47 113t113 47h832q66 0 113-47t47-113v-126q0-13 9-22l64-64q15-15 35-7t20 29zm-96-738l288 288-672 672h-288v-288zm444 132l-92 92-288-288 92-92q28-28 68-28t68 28l152 152q28 28 28 68t-28 68z"/></svg></td><td><svg class="i" width="14" height="14" viewBox="0 0 1792 1792" style="left:22px;top:22px"><path d="M888 1184l116-116-152-152-116 116v56h96v96h56zm440-720q-16-16-33 1l-350 350q-17 17-1 33t33-1l350-350q17-17 1-33zm80 594v190q0 119-84.500 203.500t-203.500 84.500h-832q-119 0-203.500-84.500t-84.500-203.500v-832q0-119 84.500-203.500t203.500-84.500h832q63 0 117 25 15 7 18 23 3 17-9 29l-49 49q-14 14-32 8-23-6-45-6h-832q-66 0-113 47t-47 113v832q0 66 47 113t113 47h832q66 0 113-47t47-113v-126q0-13 9-22l64-64q15-15 35-7t20 29zm-96-738l288 288-672 672h-288v-288zm444 132l-92 92-288-288 92-92q28-28 68-28t68 28l152 152q28 28 28 68t-28 68z"/></svg></td></tr>
<tr><td><span class="cb" style="left:4px;top:18px"></span></td><td class="ov"><button class="inc"><svg class="i" width="14" height="14" viewBox="0 0 512 512" style="left:12.5px;top:10.5px"><path d="M173.898 439.404l-166.4-166.4c-9.997-9.997-9.997-26.206 0-36.204l36.203-36.204c9.997-9.998 26.207-9.998 36.204 0L192 312.69 432.095 72.596c9.997-9.997 26.207-9.997 36.204 0l36.203 36.204c9.997 9.997 9.997 26.206 0 36.204l-294.4 294.401c-9.998 9.997-26.207 9.997-36.204-.001z"/></svg><span class="tx" style="left:31.3px;top:8px;letter-spacing:-0.01px">Included</span></button></td><td><span class="tx" style="left:4.4px;top:15px;letter-spacing:-0.43px">6688</span></td><td><span class="tx" style="left:4.2px;top:2px;letter-spacing:-0.02px">2018-01-03</span><span class="tx" style="left:4.2px;top:23px;letter-spacing:-0.02px">2018-01-08</span></td><td><span class="tx" style="left:12.5px;top:19px;letter-spacing:-0.04px">2017-12-10</span></td><td><span class="nm clip"><span class="tx" style="left:12.5px;top:19px;letter-spacing:0.32px">12/11 </span><span class="tx" style="left:51.7px;top:19px;transform:scaleX(0.922)">APL* </span><span class="tx" style="left:84.59px;top:19px;transform:scaleX(0.914)">ITUNES.COM/BILL </span><span class="tx" style="left:199.25px;top:19px;letter-spacing:-0.13px">866-712-7753 </span><span class="tx" style="left:289.25px;top:19px;transform:scaleX(0.912)">CA</span></span></td><td><span class="tx" style="left:12.7px;top:19px;letter-spacing:-0.24px">-14.99</span><svg class="i" width="14" height="14" viewBox="0 0 1792 1792" style="left:61px;top:22px"><path d="M888 1184l116-116-152-152-116 116v56h96v96h56zm440-720q-16-16-33 1l-350 350q-17 17-1 33t33-1l350-350q17-17 1-33zm80 594v190q0 119-84.500 203.500t-203.500 84.500h-832q-119 0-203.500-84.500t-84.500-203.500v-832q0-119 84.500-203.500t203.500-84.500h832q63 0 117 25 15 7 18 23 3 17-9 29l-49 49q-14 14-32 8-23-6-45-6h-832q-66 0-113 47t-47 113v832q0 66 47 113t113 47h832q66 0 113-47t47-113v-126q0-13 9-22l64-64q15-15 35-7t20 29zm-96-738l288 288-672 672h-288v-288zm444 132l-92 92-288-288 92-92q28-28 68-28t68 28l152 152q28 28 28 68t-28 68z"/></svg><button class="mini" style="left:114px;width:20px"><span class="tx" style="left:1.7px;top:1px;letter-spacing:1.45px">+/-</span></button><button class="mini" style="left:142px;width:18px"><span class="tx" style="left:1.19px;top:1px;transform:scaleX(0.906)">.00</span></button></td><td><svg class="i" width="14" height="14" viewBox="0 0 1792 1792" style="left:22px;top:22px"><path d="M888 1184l116-116-152-152-116 116v56h96v96h56zm440-720q-16-16-33 1l-350 350q-17 17-1 33t33-1l350-350q17-17 1-33zm80 594v190q0 119-84.500 203.500t-203.500 84.500h-832q-119 0-203.500-84.500t-84.500-203.500v-832q0-119 84.500-203.500t203.500-84.500h832q63 0 117 25 15 7 18 23 3 17-9 29l-49 49q-14 14-32 8-23-6-45-6h-832q-66 0-113 47t-47 113v832q0 66 47 113t113 47h832q66 0 113-47t47-113v-126q0-13 9-22l64-64q15-15 35-7t20 29zm-96-738l288 288-672 672h-288v-288zm444 132l-92 92-288-288 92-92q28-28 68-28t68 28l152 152q28 28 28 68t-28 68z"/></svg><button class="mini" style="left:114px;width:20px"><span class="tx" style="left:1.7px;top:1px;letter-spacing:1.45px">+/-</span></button><button class="mini" style="left:142px;width:18px"><span class="tx" style="left:1.19px;top:1px;transform:scaleX(0.906)">.00</span></button></td><td><svg class="i" width="14" height="14" viewBox="0 0 1792 1792" style="left:22px;top:22px"><path d="M888 1184l116-116-152-152-116 116v56h96v96h56zm440-720q-16-16-33 1l-350 350q-17 17-1 33t33-1l350-350q17-17 1-33zm80 594v190q0 119-84.500 203.500t-203.500 84.500h-832q-119 0-203.500-84.500t-84.500-203.500v-832q0-119 84.500-203.500t203.500-84.500h832q63 0 117 25 15 7 18 23 3 17-9 29l-49 49q-14 14-32 8-23-6-45-6h-832q-66 0-113 47t-47 113v832q0 66 47 113t113 47h832q66 0 113-47t47-113v-126q0-13 9-22l64-64q15-15 35-7t20 29zm-96-738l288 288-672 672h-288v-288zm444 132l-92 92-288-288 92-92q28-28 68-28t68 28l152 152q28 28 28 68t-28 68z"/></svg></td><td><svg class="i" width="14" height="14" viewBox="0 0 1792 1792" style="left:22px;top:22px"><path d="M888 1184l116-116-152-152-116 116v56h96v96h56zm440-720q-16-16-33 1l-350 350q-17 17-1 33t33-1l350-350q17-17 1-33zm80 594v190q0 119-84.500 203.500t-203.500 84.500h-832q-119 0-203.500-84.500t-84.500-203.500v-832q0-119 84.500-203.500t203.500-84.500h832q63 0 117 25 15 7 18 23 3 17-9 29l-49 49q-14 14-32 8-23-6-45-6h-832q-66 0-113 47t-47 113v832q0 66 47 113t113 47h832q66 0 113-47t47-113v-126q0-13 9-22l64-64q15-15 35-7t20 29zm-96-738l288 288-672 672h-288v-288zm444 132l-92 92-288-288 92-92q28-28 68-28t68 28l152 152q28 28 28 68t-28 68z"/></svg></td><td><svg class="i" width="14" height="14" viewBox="0 0 1792 1792" style="left:22px;top:22px"><path d="M888 1184l116-116-152-152-116 116v56h96v96h56zm440-720q-16-16-33 1l-350 350q-17 17-1 33t33-1l350-350q17-17 1-33zm80 594v190q0 119-84.500 203.500t-203.500 84.500h-832q-119 0-203.500-84.500t-84.500-203.500v-832q0-119 84.500-203.500t203.500-84.500h832q63 0 117 25 15 7 18 23 3 17-9 29l-49 49q-14 14-32 8-23-6-45-6h-832q-66 0-113 47t-47 113v832q0 66 47 113t113 47h832q66 0 113-47t47-113v-126q0-13 9-22l64-64q15-15 35-7t20 29zm-96-738l288 288-672 672h-288v-288zm444 132l-92 92-288-288 92-92q28-28 68-28t68 28l152 152q28 28 28 68t-28 68z"/></svg></td></tr>
<tr><td><span class="cb" style="left:4px;top:18px"></span></td><td class="ov"><button class="inc"><svg class="i" width="14" height="14" viewBox="0 0 512 512" style="left:12.5px;top:10.5px"><path d="M173.898 439.404l-166.4-166.4c-9.997-9.997-9.997-26.206 0-36.204l36.203-36.204c9.997-9.998 26.207-9.998 36.204 0L192 312.69 432.095 72.596c9.997-9.997 26.207-9.997 36.204 0l36.203 36.204c9.997 9.997 9.997 26.206 0 36.204l-294.4 294.401c-9.998 9.997-26.207 9.997-36.204-.001z"/></svg><span class="tx" style="left:31.3px;top:8px;letter-spacing:-0.01px">Included</span></button></td><td><span class="tx" style="left:4.4px;top:15px;letter-spacing:-0.43px">6688</span></td><td><span class="tx" style="left:4.2px;top:2px;letter-spacing:-0.02px">2018-01-03</span><span class="tx" style="left:4.2px;top:23px;letter-spacing:-0.02px">2018-01-08</span></td><td><span class="tx" style="left:12.5px;top:19px;letter-spacing:-0.04px">2017-12-10</span></td><td><span class="nm clip"><span class="tx" style="left:12.5px;top:19px;letter-spacing:0.32px">12/11 </span><span class="tx" style="left:51.7px;top:19px;transform:scaleX(0.922)">APL* </span><span class="tx" style="left:84.59px;top:19px;transform:scaleX(0.914)">ITUNES.COM/BILL </span><span class="tx" style="left:199.25px;top:19px;letter-spacing:-0.13px">866-712-7753 </span><span class="tx" style="left:289.25px;top:19px;transform:scaleX(0.912)">CA</span></span></td><td><span class="tx" style="left:12.7px;top:19px;letter-spacing:-0.15px">-7.99</span><svg class="i" width="14" height="14" viewBox="0 0 1792 1792" style="left:53.5px;top:22px"><path d="M888 1184l116-116-152-152-116 116v56h96v96h56zm440-720q-16-16-33 1l-350 350q-17 17-1 33t33-1l350-350q17-17 1-33zm80 594v190q0 119-84.500 203.500t-203.500 84.500h-832q-119 0-203.500-84.500t-84.500-203.500v-832q0-119 84.500-203.500t203.500-84.500h832q63 0 117 25 15 7 18 23 3 17-9 29l-49 49q-14 14-32 8-23-6-45-6h-832q-66 0-113 47t-47 113v832q0 66 47 113t113 47h832q66 0 113-47t47-113v-126q0-13 9-22l64-64q15-15 35-7t20 29zm-96-738l288 288-672 672h-288v-288zm444 132l-92 92-288-288 92-92q28-28 68-28t68 28l152 152q28 28 28 68t-28 68z"/></svg><button class="mini" style="left:114px;width:20px"><span class="tx" style="left:1.7px;top:1px;letter-spacing:1.45px">+/-</span></button><button class="mini" style="left:142px;width:18px"><span class="tx" style="left:1.19px;top:1px;transform:scaleX(0.906)">.00</span></button></td><td><svg class="i" width="14" height="14" viewBox="0 0 1792 1792" style="left:22px;top:22px"><path d="M888 1184l116-116-152-152-116 116v56h96v96h56zm440-720q-16-16-33 1l-350 350q-17 17-1 33t33-1l350-350q17-17 1-33zm80 594v190q0 119-84.500 203.500t-203.500 84.500h-832q-119 0-203.500-84.500t-84.500-203.500v-832q0-119 84.500-203.500t203.500-84.500h832q63 0 117 25 15 7 18 23 3 17-9 29l-49 49q-14 14-32 8-23-6-45-6h-832q-66 0-113 47t-47 113v832q0 66 47 113t113 47h832q66 0 113-47t47-113v-126q0-13 9-22l64-64q15-15 35-7t20 29zm-96-738l288 288-672 672h-288v-288zm444 132l-92 92-288-288 92-92q28-28 68-28t68 28l152 152q28 28 28 68t-28 68z"/></svg><button class="mini" style="left:114px;width:20px"><span class="tx" style="left:1.7px;top:1px;letter-spacing:1.45px">+/-</span></button><button class="mini" style="left:142px;width:18px"><span class="tx" style="left:1.19px;top:1px;transform:scaleX(0.906)">.00</span></button></td><td><svg class="i" width="14" height="14" viewBox="0 0 1792 1792" style="left:22px;top:22px"><path d="M888 1184l116-116-152-152-116 116v56h96v96h56zm440-720q-16-16-33 1l-350 350q-17 17-1 33t33-1l350-350q17-17 1-33zm80 594v190q0 119-84.500 203.500t-203.500 84.500h-832q-119 0-203.500-84.500t-84.500-203.500v-832q0-119 84.500-203.500t203.500-84.500h832q63 0 117 25 15 7 18 23 3 17-9 29l-49 49q-14 14-32 8-23-6-45-6h-832q-66 0-113 47t-47 113v832q0 66 47 113t113 47h832q66 0 113-47t47-113v-126q0-13 9-22l64-64q15-15 35-7t20 29zm-96-738l288 288-672 672h-288v-288zm444 132l-92 92-288-288 92-92q28-28 68-28t68 28l152 152q28 28 28 68t-28 68z"/></svg></td><td><svg class="i" width="14" height="14" viewBox="0 0 1792 1792" style="left:22px;top:22px"><path d="M888 1184l116-116-152-152-116 116v56h96v96h56zm440-720q-16-16-33 1l-350 350q-17 17-1 33t33-1l350-350q17-17 1-33zm80 594v190q0 119-84.500 203.500t-203.500 84.500h-832q-119 0-203.500-84.500t-84.500-203.500v-832q0-119 84.500-203.500t203.500-84.500h832q63 0 117 25 15 7 18 23 3 17-9 29l-49 49q-14 14-32 8-23-6-45-6h-832q-66 0-113 47t-47 113v832q0 66 47 113t113 47h832q66 0 113-47t47-113v-126q0-13 9-22l64-64q15-15 35-7t20 29zm-96-738l288 288-672 672h-288v-288zm444 132l-92 92-288-288 92-92q28-28 68-28t68 28l152 152q28 28 28 68t-28 68z"/></svg></td><td><svg class="i" width="14" height="14" viewBox="0 0 1792 1792" style="left:22px;top:22px"><path d="M888 1184l116-116-152-152-116 116v56h96v96h56zm440-720q-16-16-33 1l-350 350q-17 17-1 33t33-1l350-350q17-17 1-33zm80 594v190q0 119-84.500 203.500t-203.500 84.500h-832q-119 0-203.500-84.500t-84.500-203.500v-832q0-119 84.500-203.500t203.500-84.500h832q63 0 117 25 15 7 18 23 3 17-9 29l-49 49q-14 14-32 8-23-6-45-6h-832q-66 0-113 47t-47 113v832q0 66 47 113t113 47h832q66 0 113-47t47-113v-126q0-13 9-22l64-64q15-15 35-7t20 29zm-96-738l288 288-672 672h-288v-288zm444 132l-92 92-288-288 92-92q28-28 68-28t68 28l152 152q28 28 28 68t-28 68z"/></svg></td></tr>
<tr><td><span class="cb" style="left:4px;top:18px"></span></td><td class="ov"><button class="inc"><svg class="i" width="14" height="14" viewBox="0 0 512 512" style="left:12.5px;top:10.5px"><path d="M173.898 439.404l-166.4-166.4c-9.997-9.997-9.997-26.206 0-36.204l36.203-36.204c9.997-9.998 26.207-9.998 36.204 0L192 312.69 432.095 72.596c9.997-9.997 26.207-9.997 36.204 0l36.203 36.204c9.997 9.997 9.997 26.206 0 36.204l-294.4 294.401c-9.998 9.997-26.207 9.997-36.204-.001z"/></svg><span class="tx" style="left:31.3px;top:8px;letter-spacing:-0.01px">Included</span></button></td><td><span class="tx" style="left:4.4px;top:15px;letter-spacing:-0.43px">6688</span></td><td><span class="tx" style="left:4.2px;top:2px;letter-spacing:-0.02px">2018-01-03</span><span class="tx" style="left:4.2px;top:23px;letter-spacing:-0.02px">2018-01-08</span></td><td><span class="tx" style="left:12.5px;top:19px;letter-spacing:-0.04px">2017-12-10</span></td><td><span class="nm clip"><span class="tx" style="left:12.5px;top:19px;letter-spacing:0.32px">12/11 </span><span class="tx" style="left:51.7px;top:19px;transform:scaleX(0.922)">APL* </span><span class="tx" style="left:84.59px;top:19px;transform:scaleX(0.914)">ITUNES.COM/BILL </span><span class="tx" style="left:199.25px;top:19px;letter-spacing:-0.13px">866-712-7753 </span><span class="tx" style="left:289.25px;top:19px;transform:scaleX(0.912)">CA</span></span></td><td><span class="tx" style="left:12.7px;top:19px;letter-spacing:-0.15px">-0.99</span><svg class="i" width="14" height="14" viewBox="0 0 1792 1792" style="left:53.5px;top:22px"><path d="M888 1184l116-116-152-152-116 116v56h96v96h56zm440-720q-16-16-33 1l-350 350q-17 17-1 33t33-1l350-350q17-17 1-33zm80 594v190q0 119-84.500 203.500t-203.500 84.500h-832q-119 0-203.500-84.500t-84.500-203.500v-832q0-119 84.500-203.500t203.500-84.500h832q63 0 117 25 15 7 18 23 3 17-9 29l-49 49q-14 14-32 8-23-6-45-6h-832q-66 0-113 47t-47 113v832q0 66 47 113t113 47h832q66 0 113-47t47-113v-126q0-13 9-22l64-64q15-15 35-7t20 29zm-96-738l288 288-672 672h-288v-288zm444 132l-92 92-288-288 92-92q28-28 68-28t68 28l152 152q28 28 28 68t-28 68z"/></svg><button class="mini" style="left:114px;width:20px"><span class="tx" style="left:1.7px;top:1px;letter-spacing:1.45px">+/-</span></button><button class="mini" style="left:142px;width:18px"><span class="tx" style="left:1.19px;top:1px;transform:scaleX(0.906)">.00</span></button></td><td><svg class="i" width="14" height="14" viewBox="0 0 1792 1792" style="left:22px;top:22px"><path d="M888 1184l116-116-152-152-116 116v56h96v96h56zm440-720q-16-16-33 1l-350 350q-17 17-1 33t33-1l350-350q17-17 1-33zm80 594v190q0 119-84.500 203.500t-203.500 84.500h-832q-119 0-203.500-84.500t-84.500-203.500v-832q0-119 84.500-203.500t203.500-84.500h832q63 0 117 25 15 7 18 23 3 17-9 29l-49 49q-14 14-32 8-23-6-45-6h-832q-66 0-113 47t-47 113v832q0 66 47 113t113 47h832q66 0 113-47t47-113v-126q0-13 9-22l64-64q15-15 35-7t20 29zm-96-738l288 288-672 672h-288v-288zm444 132l-92 92-288-288 92-92q28-28 68-28t68 28l152 152q28 28 28 68t-28 68z"/></svg><button class="mini" style="left:114px;width:20px"><span class="tx" style="left:1.7px;top:1px;letter-spacing:1.45px">+/-</span></button><button class="mini" style="left:142px;width:18px"><span class="tx" style="left:1.19px;top:1px;transform:scaleX(0.906)">.00</span></button></td><td><svg class="i" width="14" height="14" viewBox="0 0 1792 1792" style="left:22px;top:22px"><path d="M888 1184l116-116-152-152-116 116v56h96v96h56zm440-720q-16-16-33 1l-350 350q-17 17-1 33t33-1l350-350q17-17 1-33zm80 594v190q0 119-84.500 203.500t-203.500 84.500h-832q-119 0-203.500-84.500t-84.500-203.500v-832q0-119 84.500-203.500t203.500-84.500h832q63 0 117 25 15 7 18 23 3 17-9 29l-49 49q-14 14-32 8-23-6-45-6h-832q-66 0-113 47t-47 113v832q0 66 47 113t113 47h832q66 0 113-47t47-113v-126q0-13 9-22l64-64q15-15 35-7t20 29zm-96-738l288 288-672 672h-288v-288zm444 132l-92 92-288-288 92-92q28-28 68-28t68 28l152 152q28 28 28 68t-28 68z"/></svg></td><td><svg class="i" width="14" height="14" viewBox="0 0 1792 1792" style="left:22px;top:22px"><path d="M888 1184l116-116-152-152-116 116v56h96v96h56zm440-720q-16-16-33 1l-350 350q-17 17-1 33t33-1l350-350q17-17 1-33zm80 594v190q0 119-84.500 203.500t-203.500 84.500h-832q-119 0-203.500-84.500t-84.500-203.500v-832q0-119 84.500-203.500t203.500-84.500h832q63 0 117 25 15 7 18 23 3 17-9 29l-49 49q-14 14-32 8-23-6-45-6h-832q-66 0-113 47t-47 113v832q0 66 47 113t113 47h832q66 0 113-47t47-113v-126q0-13 9-22l64-64q15-15 35-7t20 29zm-96-738l288 288-672 672h-288v-288zm444 132l-92 92-288-288 92-92q28-28 68-28t68 28l152 152q28 28 28 68t-28 68z"/></svg></td><td><svg class="i" width="14" height="14" viewBox="0 0 1792 1792" style="left:22px;top:22px"><path d="M888 1184l116-116-152-152-116 116v56h96v96h56zm440-720q-16-16-33 1l-350 350q-17 17-1 33t33-1l350-350q17-17 1-33zm80 594v190q0 119-84.500 203.500t-203.500 84.500h-832q-119 0-203.500-84.500t-84.500-203.500v-832q0-119 84.500-203.500t203.500-84.500h832q63 0 117 25 15 7 18 23 3 17-9 29l-49 49q-14 14-32 8-23-6-45-6h-832q-66 0-113 47t-47 113v832q0 66 47 113t113 47h832q66 0 113-47t47-113v-126q0-13 9-22l64-64q15-15 35-7t20 29zm-96-738l288 288-672 672h-288v-288zm444 132l-92 92-288-288 92-92q28-28 68-28t68 28l152 152q28 28 28 68t-28 68z"/></svg></td></tr>
</tbody>
</table></div>
<div class="abs sb"><span class="arrow"></span><span class="thumb"></span></div>
</body>
</html>
